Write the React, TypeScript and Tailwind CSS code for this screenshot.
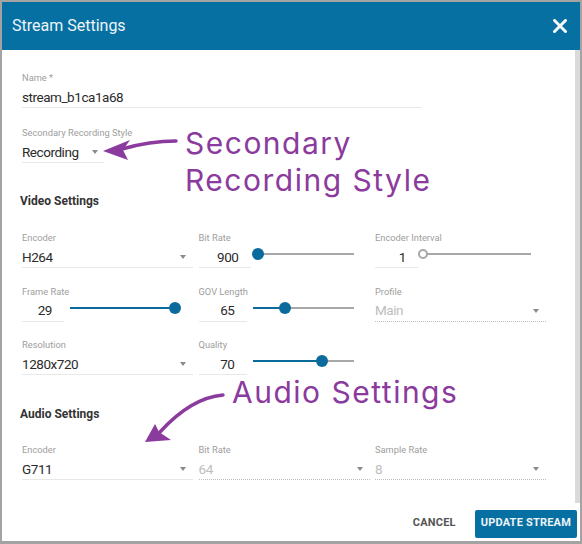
import React from "react";

function Label({ children }: { children: React.ReactNode }) {
  return <div className="text-[9.3px] leading-[12px] text-[#9e9e9e] whitespace-nowrap">{children}</div>;
}

function Caret() {
  return <span className="block w-0 h-0 border-l-[3.5px] border-r-[3.5px] border-t-[4px] border-l-transparent border-r-transparent border-t-[#8a8a8a]" />;
}

const VALUE = "text-[13.5px] tracking-[-0.45px]";

function Select({ label, value, disabled, w, pr }: { label: string; value: string; disabled?: boolean; w: string; pr: string }) {
  return (
    <div className={w}>
      <Label>{label}</Label>
      <div
        className={`h-[24px] pt-[3px] flex items-center justify-between ${pr} border-b ${VALUE} ${
          disabled ? "border-dotted border-[#bdbdbd] text-[#bdbdbd]" : "border-[#e8e8e8] text-[#2b2b2b]"
        }`}
      >
        <span>{value}</span>
        <Caret />
      </div>
    </div>
  );
}

function Slider({ cls, frac, zero }: { cls: string; frac: number; zero?: boolean }) {
  return (
    <div className={`relative h-[12px] self-start mt-[4px] ${cls}`}>
      <div className="absolute left-0 right-0 top-[5px] h-[2px] bg-[#a8a8a8]" />
      {!zero && <div className="absolute left-0 top-[5px] h-[2px] bg-[#0b6b9c]" style={{ width: `${frac * 100}%` }} />}
      {zero ? (
        <div className="absolute top-[1px] left-0 -translate-x-1/2 w-[10px] h-[10px] rounded-full border-2 border-[#a8a8a8] bg-white" />
      ) : (
        <div
          className="absolute top-0 -translate-x-1/2 w-[12px] h-[12px] rounded-full bg-[#0b6b9c]"
          style={{ left: `${frac * 100}%` }}
        />
      )}
    </div>
  );
}

function NumSlider({ label, value, inW, sl, frac, zero }: { label: string; value: string; inW: string; sl: string; frac: number; zero?: boolean }) {
  return (
    <div>
      <Label>{label}</Label>
      <div className="flex h-[24px]">
        <div className={`${inW} h-full pt-[3px] flex items-center justify-end pr-[12px] border-b border-[#e8e8e8] ${VALUE} text-[#2b2b2b]`}>
          {value}
        </div>
        <Slider cls={sl} frac={frac} zero={zero} />
      </div>
    </div>
  );
}

export default function App() {
  return (
    <div className="relative w-[582px] h-[544px] bg-[#a3a3a3] pt-[2px] px-[2px] pb-[3px] font-['Roboto',_sans-serif]">
      <div className="flex flex-col h-full bg-white">
        <div className="h-[48px] shrink-0 bg-[#0770a3] flex items-center justify-between pl-[10px] pr-[13px]">
          <span className="text-[16px] text-[#eef4f8]">Stream Settings</span>
          <svg width="14" height="14" viewBox="0 0 14 14">
            <path d="M1.5 1.5 L12.5 12.5 M12.5 1.5 L1.5 12.5" stroke="#f4f8fb" strokeWidth="3" strokeLinecap="square" />
          </svg>
        </div>
        <div className="flex flex-1 min-h-0">
          <div className="flex-1 pl-[20px] pt-[22px]">
            <div className="w-[400px]">
              <Label>Name *</Label>
              <div className={`h-[24px] pt-[3px] flex items-center border-b border-[#e8e8e8] ${VALUE} text-[#2b2b2b]`}>stream_b1ca1a68</div>
            </div>
            <div className="mt-[19px]">
              <Select label="Secondary Recording Style" value="Recording" w="w-[82px]" pr="pr-[6px]" />
            </div>
            <div className="mt-[30px] -ml-[2px] text-[12px] leading-[16px] font-bold text-[#333]">Video Settings</div>
            <div className="mt-[23px] grid grid-cols-[171px_171px_171px] gap-x-[5.5px] gap-y-[17.5px]">
              <Select label="Encoder" value="H264" w="w-full" pr="pr-[7px]" />
              <NumSlider label="Bit Rate" value="900" inW="w-[52px]" sl="ml-[7px] w-[96px]" frac={0} />
              <NumSlider label="Encoder Interval" value="1" inW="w-[43px]" sl="ml-[5px] w-[108px]" frac={0} zero />
              <NumSlider label="Frame Rate" value="29" inW="w-[42px]" sl="ml-[6px] w-[105px]" frac={1} />
              <NumSlider label="GOV Length" value="65" inW="w-[48px]" sl="ml-[6px] w-[101px]" frac={0.32} />
              <Select label="Profile" value="Main" disabled w="w-full" pr="pr-[7px]" />
              <Select label="Resolution" value="1280x720" w="w-full" pr="pr-[7px]" />
              <NumSlider label="Quality" value="70" inW="w-[48px]" sl="ml-[6px] w-[101px]" frac={0.69} />
              <div />
            </div>
            <div className="mt-[31px] -ml-[2px] text-[12px] leading-[16px] font-bold text-[#333]">Audio Settings</div>
            <div className="mt-[22px] grid grid-cols-[171px_171px_171px] gap-x-[5.5px]">
              <Select label="Encoder" value="G711" w="w-full" pr="pr-[7px]" />
              <Select label="Bit Rate" value="64" disabled w="w-full" pr="pr-[7px]" />
              <Select label="Sample Rate" value="8" disabled w="w-full" pr="pr-[7px]" />
            </div>
          </div>
          <div className="w-[5px] bg-[#dadada]" />
        </div>
        <div className="h-[38px] shrink-0 flex items-center justify-end pr-[3px] gap-[11px]">
          <button className="px-[8px] h-[28px] mt-[3px] text-[11px] font-bold text-[#555] tracking-[0.2px]">CANCEL</button>
          <button className="px-[6px] h-[28px] mt-[3px] rounded-[2px] bg-[#0770a3] text-[11px] font-bold text-[#eef4f8] tracking-[0.2px]">
            UPDATE STREAM
          </button>
        </div>
      </div>

      <div className="absolute left-[185px] top-[125px] text-[30px] leading-[37px] tracking-[1.5px] text-[#8b3a9d] font-['Inter',_sans-serif] pointer-events-none">
        <div>Secondary</div>
        <div>Recording Style</div>
      </div>
      <div className="absolute left-[232px] top-[374px] text-[30px] leading-[37px] tracking-[1.5px] text-[#8b3a9d] font-['Inter',_sans-serif] pointer-events-none">
        Audio Settings
      </div>
      <svg className="absolute left-0 top-0 pointer-events-none" width="582" height="544" viewBox="0 0 582 544">
        <path d="M176 141 Q150 141 122 149" stroke="#8b3a9d" strokeWidth="3.5" fill="none" strokeLinecap="round" />
        <polygon points="103,151 130,140 123,150 128,160" fill="#8b3a9d" />
        <path d="M223 395 C200 397 180 410 160 432" stroke="#8b3a9d" strokeWidth="3.5" fill="none" strokeLinecap="round" />
        <polygon points="145,442 155,424 159,432 171,440" fill="#8b3a9d" />
      </svg>
    </div>
  );
}
